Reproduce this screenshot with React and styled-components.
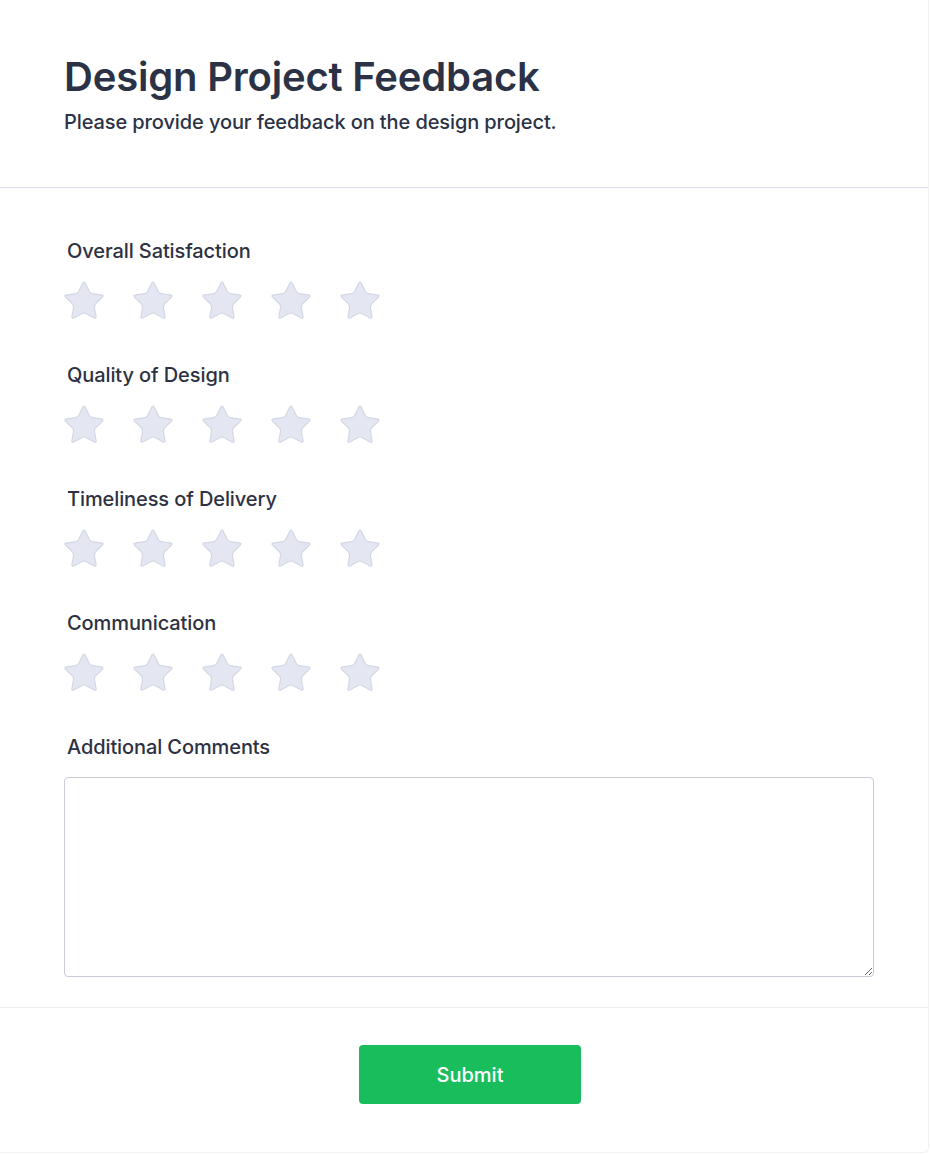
import React from 'react'
import styled, { createGlobalStyle } from 'styled-components'

const GlobalStyle = createGlobalStyle`
  body {
    margin: 0;
    background: #fff;
    font-family: Inter, "Noto Sans", sans-serif;
  }
`

const Card = styled.div`
  width: 929px;
  min-height: 1153px;
  background: #fff;
  border-right: 1px solid #f1f2f5;
  border-bottom: 1px solid #f1f2f5;
  border-bottom-right-radius: 6px;
  box-sizing: border-box;
`

const Header = styled.header`
  padding: 53px 64px 51px;
  border-bottom: 1px solid #dcdfea;
`

const Title = styled.h1`
  margin: 0;
  font-size: 40px;
  line-height: 48px;
  font-weight: 600;
  letter-spacing: -0.2px;
  color: #2b3245;
`

const Subtitle = styled.p`
  margin: 7px 0 0;
  font-size: 20px;
  line-height: 28px;
  font-weight: 500;
  letter-spacing: -0.1px;
  color: #2b3245;
`

const Form = styled.div`
  padding: 49px 54px 30px 64px;
  border-bottom: 1px solid #eceef3;
  display: flex;
  flex-direction: column;
  gap: 42px;
`

const Field = styled.div`
  display: flex;
  flex-direction: column;
  gap: 16px;
`

const Label = styled.label`
  font-size: 20px;
  line-height: 28px;
  font-weight: 500;
  letter-spacing: -0.1px;
  color: #2d3142;
  padding-left: 3px;
`

const Stars = styled.div`
  display: flex;
  gap: 29px;
  height: 38px;
  align-items: center;
`

const StarIcon = styled.svg`
  width: 40px;
  height: 40px;
  margin-top: 2px;
  cursor: pointer;
`

const TextArea = styled.textarea`
  display: block;
  width: 100%;
  height: 200px;
  box-sizing: border-box;
  border: 1px solid #c8cbd9;
  border-radius: 4px;
  padding: 12px;
  font-family: inherit;
  font-size: 16px;
  resize: vertical;
  outline: none;
`

const Footer = styled.footer`
  display: flex;
  justify-content: center;
  padding: 37px 0 48px 12px;
`

const SubmitButton = styled.button`
  width: 222px;
  height: 59px;
  border: none;
  border-radius: 4px;
  background: #19bd5c;
  color: #fff;
  font-family: inherit;
  font-size: 20px;
  font-weight: 500;
  cursor: pointer;
`

const Star = () => (
  <StarIcon viewBox="1.5 1.5 21 21">
    <path
      d="M11.525 2.295a.53.53 0 0 1 .95 0l2.31 4.679a2.123 2.123 0 0 0 1.595 1.16l5.166.756a.53.53 0 0 1 .294.904l-3.736 3.638a2.123 2.123 0 0 0-.611 1.878l.882 5.14a.53.53 0 0 1-.771.56l-4.618-2.428a2.122 2.122 0 0 0-1.973 0L6.396 21.01a.53.53 0 0 1-.77-.56l.881-5.139a2.122 2.122 0 0 0-.611-1.879L2.16 9.795a.53.53 0 0 1 .294-.906l5.165-.755a2.122 2.122 0 0 0 1.597-1.16z"
      fill="#e4e7f1"
      stroke="#d3d7e5"
      strokeWidth="0.6"
      strokeLinejoin="round"
    />
  </StarIcon>
)

const questions = [
  'Overall Satisfaction',
  'Quality of Design',
  'Timeliness of Delivery',
  'Communication',
]

const App = () => {
  return (
    <Card>
      <GlobalStyle />
      <Header>
        <Title>Design Project Feedback</Title>
        <Subtitle>Please provide your feedback on the design project.</Subtitle>
      </Header>
      <Form>
        {questions.map((q) => (
          <Field key={q}>
            <Label>{q}</Label>
            <Stars>
              {[1, 2, 3, 4, 5].map((n) => <Star key={n} />)}
            </Stars>
          </Field>
        ))}
        <Field>
          <Label>Additional Comments</Label>
          <TextArea />
        </Field>
      </Form>
      <Footer>
        <SubmitButton>Submit</SubmitButton>
      </Footer>
    </Card>
  )
}

export default App
